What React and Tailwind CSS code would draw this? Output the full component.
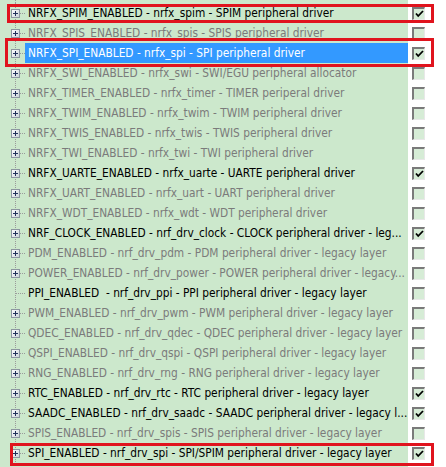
import React from 'react';

const rows = [
  { text: 'NRFX_SPIM_ENABLED - nrfx_spim - SPIM peripheral driver', on: true, checked: true },
  { text: 'NRFX_SPIS_ENABLED - nrfx_spis - SPIS peripheral driver' },
  { text: 'NRFX_SPI_ENABLED - nrfx_spi - SPI peripheral driver', on: true, checked: true, selected: true },
  { text: 'NRFX_SWI_ENABLED - nrfx_swi - SWI/EGU peripheral allocator' },
  { text: 'NRFX_TIMER_ENABLED - nrfx_timer - TIMER periperal driver' },
  { text: 'NRFX_TWIM_ENABLED - nrfx_twim - TWIM peripheral driver' },
  { text: 'NRFX_TWIS_ENABLED - nrfx_twis - TWIS peripheral driver' },
  { text: 'NRFX_TWI_ENABLED - nrfx_twi - TWI peripheral driver' },
  { text: 'NRFX_UARTE_ENABLED - nrfx_uarte - UARTE peripheral driver', on: true, checked: true },
  { text: 'NRFX_UART_ENABLED - nrfx_uart - UART peripheral driver' },
  { text: 'NRFX_WDT_ENABLED - nrfx_wdt - WDT peripheral driver' },
  { text: 'NRF_CLOCK_ENABLED - nrf_drv_clock - CLOCK peripheral driver - leg...', on: true, checked: true },
  { text: 'PDM_ENABLED - nrf_drv_pdm - PDM peripheral driver - legacy layer' },
  { text: 'POWER_ENABLED - nrf_drv_power - POWER peripheral driver - legacy...' },
  { text: 'PPI_ENABLED  - nrf_drv_ppi - PPI peripheral driver - legacy layer', on: true, leaf: true },
  { text: 'PWM_ENABLED - nrf_drv_pwm - PWM peripheral driver - legacy layer' },
  { text: 'QDEC_ENABLED - nrf_drv_qdec - QDEC peripheral driver - legacy layer' },
  { text: 'QSPI_ENABLED - nrf_drv_qspi - QSPI peripheral driver - legacy layer' },
  { text: 'RNG_ENABLED - nrf_drv_rng - RNG peripheral driver - legacy layer' },
  { text: 'RTC_ENABLED - nrf_drv_rtc - RTC peripheral driver - legacy layer', on: true, checked: true },
  { text: 'SAADC_ENABLED - nrf_drv_saadc - SAADC peripheral driver - legacy l...', on: true, checked: true },
  { text: 'SPIS_ENABLED - nrf_drv_spis - SPIS peripheral driver - legacy layer' },
  { text: 'SPI_ENABLED - nrf_drv_spi - SPI/SPIM peripheral driver - legacy layer', on: true, checked: true },
  { text: '', partial: true },
];

const TreeGlyph = ({ leaf }) => (
  <svg width="25" height="20" viewBox="0 0 25 20" className="shrink-0">
    <line x1="15.5" y1="0" x2="15.5" y2="20" stroke="#9a9a9a" strokeDasharray="1 1" />
    <line x1={leaf ? 16 : 20} y1="10.5" x2="25" y2="10.5" stroke="#9a9a9a" strokeDasharray="1 1" />
    {!leaf && (
      <>
        <defs>
          <linearGradient id="pb" x1="0" y1="0" x2="1" y2="1">
            <stop offset="0" stopColor="#ffffff" />
            <stop offset="1" stopColor="#c8d0d8" />
          </linearGradient>
        </defs>
        <rect x="11.5" y="6.5" width="8" height="8" fill="url(#pb)" stroke="#8c96a0" />
        <line x1="13" y1="10.5" x2="18" y2="10.5" stroke="#20305a" />
        <line x1="15.5" y1="8" x2="15.5" y2="13" stroke="#20305a" />
      </>
    )}
  </svg>
);

const CheckBox = ({ checked }) => (
  <div className="w-[13px] h-[13px] border-t-2 border-l-2 border-t-[#7a7a7a] border-l-[#7a7a7a] border-b border-r border-b-[#e8e8e8] border-r-[#e8e8e8] bg-[#d6ecd6] flex items-center justify-center">
    {checked && (
      <svg width="9" height="8" viewBox="0 0 9 8">
        <path d="M1 3.5 L3.2 6 L8 1" fill="none" stroke="#000" strokeWidth="1.8" />
      </svg>
    )}
  </div>
);

const Row = ({ row }) => (
  <div className="flex h-[20px]">
    <div className="w-[408px] flex bg-[#cce8cc]">
      <TreeGlyph leaf={row.leaf || row.partial} />
      <div
        className={
          'flex-1 min-w-0 pl-[3px] leading-[20px] whitespace-pre overflow-hidden ' +
          (row.selected ? 'bg-[#3399ff] text-white' : row.on ? 'text-black' : 'text-[#7b7b7b]')
        }
      >
        {row.text}
      </div>
    </div>
    <div className="flex-1 bg-white flex items-center pl-[4px]">
      <CheckBox checked={row.checked} />
    </div>
  </div>
);

export default function App() {
  return (
    <div
      className="relative w-[446px] h-[467px] overflow-hidden bg-white text-[11.8px]"
      style={{ fontFamily: '"DejaVu Sans Condensed", "DejaVu Sans", sans-serif' }}
    >
      <div className="flex h-[3px]">
        <div className="w-[408px] bg-[#cce8cc] flex">
          <div className="ml-[15px] h-full border-l border-dotted border-[#9a9a9a]" />
        </div>
        <div className="flex-1 bg-white" />
      </div>
      {rows.map((row, i) => (
        <Row key={i} row={row} />
      ))}

      {/* red highlight frames */}
      <div className="absolute left-[7px] top-[4px] w-[427px] h-[19px] border-[3px] border-[#e0141e]" />
      <div className="absolute left-[5px] top-[38px] w-[429px] h-[29px] border-[3px] border-[#e0141e]" />
      <div className="absolute left-[10px] top-[443px] w-[424px] h-[23px] border-[3px] border-[#e0141e]" />
    </div>
  );
}
